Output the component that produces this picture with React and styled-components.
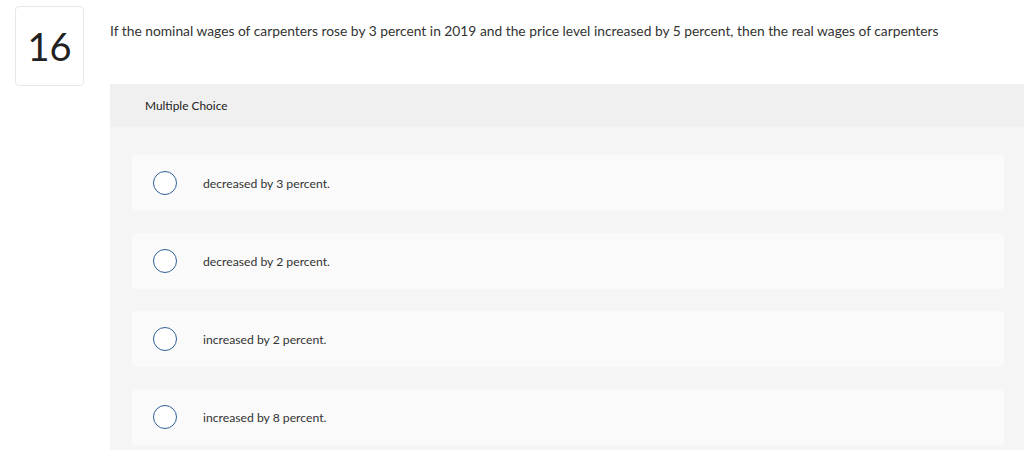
import React from 'react';
import styled, { createGlobalStyle } from "styled-components";

const GlobalStyle = createGlobalStyle`
  body {
    margin: 0;
    background: #fff;
    font-family: "Lato", "Open Sans", sans-serif;
    color: #333;
  }
`

const options = [
  "decreased by 3 percent.",
  "decreased by 2 percent.",
  "increased by 2 percent.",
  "increased by 8 percent.",
]

const App = () => {
  return (
    <>
      <GlobalStyle />
      <Page>
        <NumberBox>16</NumberBox>
        <Main>
          <Question>
            If the nominal wages of carpenters rose by 3 percent in 2019 and the price level increased by 5 percent, then the real wages of carpenters
          </Question>
          <Panel>
            <PanelHeader>Multiple Choice</PanelHeader>
            <OptionList>
              {options.map((text) => (
                <Option key={text}>
                  <Radio />
                  <OptionText>{text}</OptionText>
                </Option>
              ))}
            </OptionList>
          </Panel>
        </Main>
      </Page>
    </>
  );
}

const Page = styled.div`
  display: flex;
  align-items: flex-start;
  padding: 6px 0 0 15px;
  height: 450px;
  box-sizing: border-box;
  overflow: hidden;
`
const NumberBox = styled.div`
  width: 69px;
  height: 80px;
  box-sizing: border-box;
  border: 1px solid #e8e8e8;
  border-radius: 4px;
  display: flex;
  align-items: center;
  justify-content: center;
  font-size: 38px;
  font-weight: 400;
  color: #222;
  flex-shrink: 0;
`
const Main = styled.div`
  flex: 1;
  align-self: stretch;
  margin-left: 26px;
  display: flex;
  flex-direction: column;
`
const Question = styled.p`
  margin: 0;
  padding-top: 16px;
  height: 78px;
  box-sizing: border-box;
  font-size: 13.8px;
  line-height: 18px;
  color: #333;
`
const Panel = styled.div`
  flex: 1;
  background: #f5f5f5;
`
const PanelHeader = styled.div`
  background: #f0f0f0;
  height: 43px;
  display: flex;
  align-items: center;
  padding-left: 35px;
  font-size: 11.9px;
  color: #222;
`
const OptionList = styled.div`
  display: flex;
  flex-direction: column;
  gap: 22px;
  padding: 28px 20px 0 22px;
`
const Option = styled.div`
  height: 56px;
  background: #fafafa;
  border-radius: 3px;
  display: flex;
  align-items: center;
  padding-left: 21px;
`
const Radio = styled.span`
  width: 22px;
  height: 22px;
  border: 1px solid #2f5f94;
  border-radius: 50%;
  background: #fff;
  flex-shrink: 0;
`
const OptionText = styled.span`
  margin-left: 26px;
  font-size: 12.2px;
  color: #333;
`

export default App;
